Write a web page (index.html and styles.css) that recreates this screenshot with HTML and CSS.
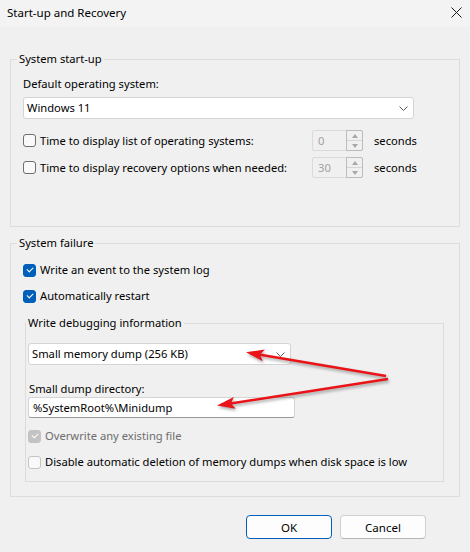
FILE: index.html
```html
<!DOCTYPE html>
<html lang="en">
<head>
    <meta charset="UTF-8">
    <meta name="viewport" content="width=device-width, initial-scale=1.0">
    <title>Start-up and Recovery</title>
    <link rel="stylesheet" href="styles.css">
</head>
<body>
    <div class="window">
        <div class="titlebar">
            <span class="title">Start-up and Recovery</span>
            <span class="close-btn">
                <svg width="11" height="11" viewBox="0 0 11 11">
                    <path d="M0.5 0.5L10.5 10.5M10.5 0.5L0.5 10.5" stroke="#1b1b1b" stroke-width="1"/>
                </svg>
            </span>
        </div>

        <fieldset class="group startup">
            <legend>System start-up</legend>
            <div class="group-body">
                <div class="field-label">Default operating system:</div>
                <div class="select os-select">
                    <span>Windows 11</span>
                    <svg class="chevron" width="9" height="5" viewBox="0 0 9 5">
                        <path d="M0.5 0.5L4.5 4.5L8.5 0.5" fill="none" stroke="#5c5c5c" stroke-width="1"/>
                    </svg>
                </div>

                <div class="timer-row first">
                    <label class="check"><span class="box"></span>Time to display list of operating systems:</label>
                    <div class="spin">
                        <span class="spin-value">0</span>
                        <span class="spin-btns"><span class="spin-up"></span><span class="spin-down"></span></span>
                    </div>
                    <span class="unit">seconds</span>
                </div>
                <div class="timer-row">
                    <label class="check"><span class="box"></span>Time to display recovery options when needed:</label>
                    <div class="spin">
                        <span class="spin-value">30</span>
                        <span class="spin-btns"><span class="spin-up"></span><span class="spin-down"></span></span>
                    </div>
                    <span class="unit">seconds</span>
                </div>
            </div>
        </fieldset>

        <fieldset class="group failure">
            <legend>System failure</legend>
            <div class="group-body">
                <label class="check first"><span class="box checked"></span>Write an event to the system log</label>
                <label class="check"><span class="box checked"></span>Automatically restart</label>

                <fieldset class="group debug">
                    <legend>Write debugging information</legend>
                    <div class="debug-body">
                        <div class="select dump-select">
                            <span>Small memory dump (256 KB)</span>
                            <svg class="chevron" width="9" height="5" viewBox="0 0 9 5">
                                <path d="M0.5 0.5L4.5 4.5L8.5 0.5" fill="none" stroke="#5c5c5c" stroke-width="1"/>
                            </svg>
                        </div>
                        <div class="field-label dir-label">Small dump directory:</div>
                        <div class="textbox">%SystemRoot%\Minidump</div>
                        <label class="check disabled first"><span class="box checked"></span>Overwrite any existing file</label>
                        <label class="check"><span class="box"></span>Disable automatic deletion of memory dumps when disk space is low</label>
                    </div>
                </fieldset>
            </div>
        </fieldset>

        <div class="buttons">
            <button class="btn default">OK</button>
            <button class="btn">Cancel</button>
        </div>

        <!-- callout arrows pointing at the dump settings -->
        <svg class="callouts" width="470" height="552" viewBox="0 0 470 552">
            <defs>
                <marker id="arrow-head" markerWidth="18" markerHeight="12" refX="14" refY="6" orient="auto" markerUnits="userSpaceOnUse">
                    <path d="M0 0L18 6L0 12L4 6Z" fill="#ea1418"/>
                </marker>
            </defs>
            <line x1="386" y1="376" x2="250" y2="353" stroke="#ea1418" stroke-width="2.5" marker-end="url(#arrow-head)"/>
            <line x1="388" y1="379" x2="221" y2="405" stroke="#ea1418" stroke-width="2.5" marker-end="url(#arrow-head)"/>
        </svg>
    </div>
</body>
</html>
```

FILE: styles.css
```css
body {
    margin: 0;
    padding: 0;
    font-family: "Noto Sans", "Open Sans", sans-serif;
    font-size: 11.2px;
    line-height: 16px;
    color: #000;
    background: #f0f0f0;
}

.window {
    position: relative;
    width: 470px;
    height: 552px;
    overflow: hidden;
    background: #f0f0f0;
}

.titlebar {
    height: 27px;
    display: flex;
    justify-content: space-between;
    align-items: flex-start;
    padding: 5px 7px 0 7px;
    box-sizing: border-box;
    background: #f3f3f3;
}

.title {
    font-size: 11.5px;
}

.close-btn {
    display: block;
    margin-top: 2px;
    margin-right: 1px;
}

.close-btn svg {
    display: block;
}

/* group boxes */
.group {
    margin: 0 10px;
    padding: 0;
    border: 1px solid #dcdcdc;
    min-width: 0;
}

.group legend {
    margin-left: 6px;
    padding: 0 2px;
    line-height: 16px;
}

.startup {
    margin-top: 24px;
}

.failure {
    margin-top: 8px;
}

.group-body {
    padding: 9px 12px 0 12px;
}

.startup .group-body {
    padding-bottom: 48px;
}

.failure .group-body {
    padding-top: 11px;
    padding-bottom: 14px;
}

.field-label {
    height: 16px;
}

/* dropdowns and text boxes */
.select {
    display: flex;
    justify-content: space-between;
    align-items: center;
    height: 22px;
    box-sizing: border-box;
    padding: 0 5px 0 3px;
    background: #fff;
    border: 1px solid #d4d4d4;
    border-radius: 3px;
}

.chevron {
    display: block;
}

.os-select {
    width: 391px;
    margin-top: 5px;
}

.timer-row {
    display: grid;
    grid-template-columns: 278px 51px auto;
    column-gap: 11px;
    align-items: center;
    height: 21px;
    margin-top: 6px;
}

.timer-row.first {
    margin-top: 11px;
}

.spin {
    display: flex;
    height: 21px;
    box-sizing: border-box;
    border: 1px solid #dadada;
    border-radius: 2px;
    background: #f0f0f0;
}

.spin-value {
    flex: 1;
    padding-left: 5px;
    line-height: 19px;
    color: #a0a0a0;
}

.spin-btns {
    display: flex;
    flex-direction: column;
    width: 15px;
    margin: -1px -1px -1px 0;
    border: 1px solid #bcbcbc;
    border-radius: 0 2px 2px 0;
}

.spin-up,
.spin-down {
    flex: 1;
    display: flex;
    justify-content: center;
    align-items: center;
}

.spin-up {
    border-bottom: 1px solid #d6d6d6;
}

.spin-up::after,
.spin-down::after {
    content: "";
    width: 0;
    height: 0;
    border-left: 3px solid transparent;
    border-right: 3px solid transparent;
}

.spin-up::after {
    border-bottom: 4px solid #a8a8a8;
}

.spin-down::after {
    border-top: 4px solid #a8a8a8;
}

/* checkboxes */
.check {
    display: flex;
    align-items: center;
    gap: 4px;
    height: 16px;
}

.group-body > .check + .check {
    margin-top: 10px;
}

.box {
    flex: none;
    width: 13px;
    height: 13px;
    box-sizing: border-box;
    border: 1px solid #6e6e6e;
    border-radius: 3px;
    background: #f9f9f9;
}

.box.checked {
    background: #005fb8;
    border-color: #005fb8;
    display: flex;
    justify-content: center;
    align-items: center;
}

.box.checked::after {
    content: "";
    width: 5px;
    height: 3px;
    border-left: 1px solid #fff;
    border-bottom: 1px solid #fff;
    transform: translateY(-1px) rotate(-45deg);
}

.check.disabled {
    color: #6d6d6d;
}

.check.disabled .box.checked {
    background: #c3c3c3;
    border-color: #c3c3c3;
}

.debug-body .check .box {
    border-color: #c4c4c4;
}

/* debugging information sub-group */
.debug {
    margin: 11px 3px 0 2px;
}

.debug legend {
    margin-left: 0;
}

.debug-body {
    padding: 12px 2px 11px 2px;
}

.debug-body .check.first {
    margin-top: 10px;
}

.debug-body .check + .check {
    margin-top: 10px;
}

.dump-select {
    width: 263px;
}

.dir-label {
    margin-top: 16px;
    padding-left: 1px;
}

.textbox {
    width: 267px;
    height: 21px;
    box-sizing: border-box;
    padding-left: 4px;
    line-height: 19px;
    background: #fff;
    border: 1px solid #d4d4d4;
    border-bottom-color: #999;
    border-radius: 3px;
}

/* dialog buttons */
.buttons {
    display: flex;
    justify-content: flex-end;
    gap: 8px;
    margin-top: 18px;
    padding-right: 44px;
}

.btn {
    width: 86px;
    height: 24px;
    font-family: inherit;
    font-size: 11.5px;
    color: #000;
    background: #fdfdfd;
    border: 1px solid #d0d0d0;
    border-bottom-color: #b5b5b5;
    border-radius: 4px;
    padding: 0;
}

.btn.default {
    border-color: #005fb8;
}

.callouts {
    position: absolute;
    top: 0;
    left: 0;
    pointer-events: none;
    filter: drop-shadow(1px 2px 1.5px rgba(0, 0, 0, 0.35));
}
```
